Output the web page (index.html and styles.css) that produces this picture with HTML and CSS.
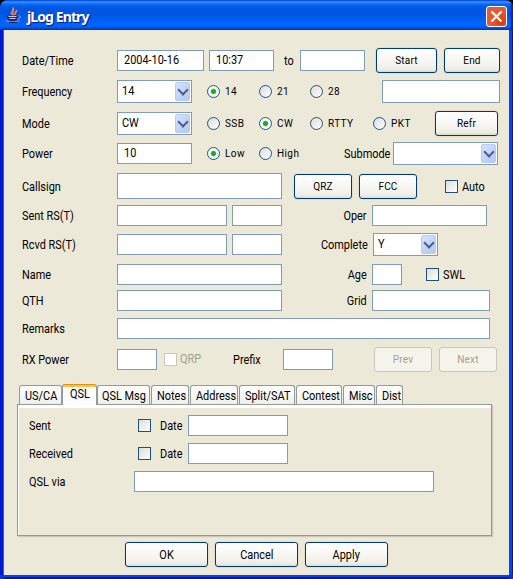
FILE: index.html
```html
<!DOCTYPE html>
<html lang="en">
<head>
<meta charset="utf-8">
<title>jLog Entry</title>
<link rel="stylesheet" href="styles.css">
</head>
<body>
<div class="window">
  <header class="titlebar">
    <svg class="java" width="18" height="18" viewBox="0 0 18 18" fill="none">
      <path d="M8.500 9.500C5 6.800 9.500 5.500 8 1.500M10 9c-1.500-2 2.500-3 1.500-5" stroke="#f58a55" stroke-width="1.700"/>
      <path d="M6.500 8.500C5.500 7 6 6 7 5" stroke="#b98795"/>
      <path d="M2 9.500h11c0 4-1.800 5.500-5.500 5.500S2 13.500 2 9.500z" fill="#25265f"/>
      <path d="M3.500 10.500h8M4.500 12.500h6" stroke="#c5cbe9"/>
      <path d="M13 10c3.500-1 3.500 2.500-.8 3M.8 14.500c2.500 2 11 2 14 0" stroke="#8e9bd8"/>
      <path d="M4 16.500h8" stroke="#25265f"/>
    </svg>
    <h1>jLog Entry</h1>
    <button class="close" aria-label="Close"><svg width="13" height="13" viewBox="0 0 13 13"><path d="M1.500 1.500l10 10M11.500 1.500l-10 10" stroke="#fff" stroke-width="2.300"/></svg></button>
  </header>
  <main>
    <div class="row r-date">
      <label><span>Date/Time</span></label>
      <div class="field"><span>2004-10-16</span></div>
      <div class="field"><span>10:37</span></div>
      <label><span>to</span></label>
      <div class="field"></div>
      <button class="btn">Start</button>
      <button class="btn">End</button>
    </div>
    <div class="row r-freq">
      <label><span>Frequency</span></label>
      <div class="combo"><span>14</span><i class="arrow"></i></div>
      <label class="radio on"><i></i>14</label>
      <label class="radio"><i></i>21</label>
      <label class="radio"><i></i>28</label>
      <div class="field tall"></div>
    </div>
    <div class="row r-mode">
      <label><span>Mode</span></label>
      <div class="combo"><span>CW</span><i class="arrow"></i></div>
      <label class="radio"><i></i>SSB</label>
      <label class="radio on"><i></i>CW</label>
      <label class="radio"><i></i>RTTY</label>
      <label class="radio"><i></i>PKT</label>
      <button class="btn">Refr</button>
    </div>
    <div class="row r-power">
      <label><span>Power</span></label>
      <div class="field"><span>10</span></div>
      <label class="radio on"><i></i>Low</label>
      <label class="radio"><i></i>High</label>
      <label><span>Submode</span></label>
      <div class="combo"><span></span><i class="arrow"></i></div>
    </div>
    <div class="row r-call">
      <label><span>Callsign</span></label>
      <div class="field"></div>
      <button class="btn">QRZ</button>
      <button class="btn">FCC</button>
      <label class="check"><i></i><span>Auto</span></label>
    </div>
    <div class="row r-sent">
      <label><span>Sent RS(T)</span></label>
      <div class="field"></div>
      <div class="field"></div>
      <label class="right"><span>Oper</span></label>
      <div class="field"></div>
    </div>
    <div class="row r-rcvd">
      <label><span>Rcvd RS(T)</span></label>
      <div class="field"></div>
      <div class="field"></div>
      <label class="right"><span>Complete</span></label>
      <div class="combo"><span>Y</span><i class="arrow"></i></div>
    </div>
    <div class="row r-name">
      <label><span>Name</span></label>
      <div class="field"></div>
      <label class="right"><span>Age</span></label>
      <div class="field"></div>
      <label class="check"><i></i><span>SWL</span></label>
    </div>
    <div class="row r-qth">
      <label><span>QTH</span></label>
      <div class="field"></div>
      <label class="right"><span>Grid</span></label>
      <div class="field"></div>
    </div>
    <div class="row r-remarks">
      <label><span>Remarks</span></label>
      <div class="field"></div>
    </div>
    <div class="row r-rx">
      <label><span>RX Power</span></label>
      <div class="field"></div>
      <label class="check off"><i></i><span>QRP</span></label>
      <label><span>Prefix</span></label>
      <div class="field"></div>
      <button class="btn" disabled>Prev</button>
      <button class="btn" disabled>Next</button>
    </div>
    <nav class="tabs">
      <div class="tab"><span>US/CA</span></div>
      <div class="tab active"><span>QSL</span></div>
      <div class="tab"><span>QSL Msg</span></div>
      <div class="tab"><span>Notes</span></div>
      <div class="tab"><span>Address</span></div>
      <div class="tab"><span>Split/SAT</span></div>
      <div class="tab"><span>Contest</span></div>
      <div class="tab"><span>Misc</span></div>
      <div class="tab"><span>Dist</span></div>
    </nav>
    <section class="panel">
      <div class="row p-date">
        <label><span>Sent</span></label>
        <label class="check"><i></i><span>Date</span></label>
        <div class="field"></div>
      </div>
      <div class="row p-date">
        <label><span>Received</span></label>
        <label class="check"><i></i><span>Date</span></label>
        <div class="field"></div>
      </div>
      <div class="row p-via">
        <label><span>QSL via</span></label>
        <div class="field"></div>
      </div>
    </section>
    <footer>
      <button class="btn main"><span>OK</span></button>
      <button class="btn main"><span>Cancel</span></button>
      <button class="btn main"><span>Apply</span></button>
    </footer>
  </main>
</div>
</body>
</html>
```
FILE: styles.css
```css
* { box-sizing: border-box; }
body {
  margin: 0;
  background: #000;
  font: 13px/15px Roboto, sans-serif;
  color: #000;
}
button { font: inherit; padding: 0; margin: 0; color: inherit; }
i { display: block; flex: none; }

/* condensed form text */
span {
  display: inline-block;
  transform: scaleX(.84);
  transform-origin: left;
}
.right span { transform-origin: right; }
.btn span { transform-origin: center; }

.window {
  width: 513px;
  height: 579px;
  border-radius: 8px 8px 0 0;
  overflow: hidden;
  display: flex;
  flex-direction: column;
  background: #0831d9;
}
.titlebar {
  flex: none;
  height: 30px;
  display: flex;
  align-items: center;
  padding: 2px 6px 0 5px;
  background: linear-gradient(#0058e6 0, #3a93ff 2px, #0a6af5 4px, #0055e2 8px, #0054e3 15px, #0062fb 22px, #0066ff 26px, #0050d8 28px, #003dc0 30px);
  box-shadow: inset -2px 0 2px #0020a0;
}
.java { margin-top: -2px; }
h1 {
  margin: 2px auto 0 4px;
  font: bold 14px/18px "Noto Sans", sans-serif;
  letter-spacing: -.9px;
  color: #fff;
  text-shadow: 1px 1px 1px #0a1883;
}
.close {
  width: 21px;
  height: 21px;
  display: flex;
  align-items: center;
  justify-content: center;
  border: 1px solid #fff;
  border-radius: 3px;
  background: radial-gradient(circle at 75% 80%, #d93c08, #e5582f 50%, #d8604a 100%);
}
main {
  flex: 1;
  margin: 0 4px 4px;
  padding-top: 18px;
  background: #ece9d8;
  box-shadow: -1px 0 #166aee, -4px 0 #0019cf, 3px 0 #0046ea, 4px 0 #00139a, 0 2px #0046ea, 0 4px #00139a;
}

.row {
  display: grid;
  align-items: center;
  height: 25px;
  padding-left: 18px;
}
.row label { white-space: nowrap; }
.row .right { justify-self: end; padding-right: 5px; }
.r-date { grid-template-columns: 95px 92px 75px 16px 76px 68px 56px; margin-bottom: 6px; }
.r-date > :nth-child(2) { width: 87px; }
.r-date > :nth-child(3), .r-date > :nth-child(5) { width: 65px; }
.r-date > :nth-child(6) { width: 61px; }
.r-freq { grid-template-columns: 95px 90px 52px 51px 72px 118px; margin-bottom: 7px; }
.r-mode { grid-template-columns: 95px 90px 52px 51px 63px 62px 63px; margin-bottom: 5px; }
.r-power { grid-template-columns: 95px 90px 52px 85px 49px 105px; margin-bottom: 7px; }
.r-freq .combo, .r-mode .combo, .r-power .field { width: 75px; }
.r-call { grid-template-columns: 95px 177px 65px 86px 50px; height: 26px; margin-bottom: 4px; }
.r-call .field { width: 165px; height: 26px; }
.r-call .btn { width: 58px; margin-top: 1px; }
.r-sent, .r-rcvd { grid-template-columns: 95px 115px 50px 90px 115px; margin-bottom: 4px; }
.r-sent > :nth-child(2), .r-rcvd > :nth-child(2) { width: 110px; }
.r-rcvd { margin-bottom: 5px; }
.r-rcvd > .combo { width: 65px; margin-left: 1px; }
.r-rcvd .right { padding-right: 4px; }
.r-name { grid-template-columns: 95px 165px 90px 54px 60px; margin-bottom: 1px; }
.r-name > :nth-child(4) { width: 30px; }
.r-qth { grid-template-columns: 95px 165px 90px 118px; margin-bottom: 3px; }
.r-remarks { grid-template-columns: 95px 373px; margin-bottom: 6px; }
.r-rx { grid-template-columns: 95px 47px 69px 50px 91px 65px 58px; margin-bottom: 12px; }
.r-rx > :nth-child(2) { width: 40px; }
.r-rx > :nth-child(5) { width: 50px; }
.r-rx .btn { width: 58px; }

.field, .combo {
  height: 21px;
  border: 1px solid #7f9db9;
  background: #fff;
  line-height: 18px;
}
.field { padding-left: 6px; }
.field.tall { height: 23px; }
.combo {
  height: 23px;
  display: flex;
  justify-content: space-between;
  padding: 1px 1px 1px 4px;
}
.arrow {
  width: 15px;
  height: 19px;
  border: 1px solid #b8cbf3;
  border-radius: 2px;
  background: linear-gradient(135deg, #d6e2fd, #b2c8f7);
  display: flex;
  align-items: center;
  justify-content: center;
}
.arrow::before {
  content: "";
  width: 6px;
  height: 6px;
  margin-top: -3px;
  border: solid #4d6185;
  border-width: 0 2px 2px 0;
  transform: rotate(45deg);
}
.btn {
  height: 25px;
  border: 1px solid #003c74;
  border-radius: 3px;
  background: linear-gradient(#fff, #f4f3ee 70%, #ecebe4 90%, #dcd8cc);
  box-shadow: 0 0 0 1px #e3dfcf;
  font: 10px/20px Roboto, sans-serif;
  letter-spacing: .2px;
}
.btn.main { font: 13px/20px Roboto, sans-serif; letter-spacing: 0; }
.btn:disabled { border-color: #c9c7ba; background: #f5f4ea; color: #a1a192; box-shadow: none; }

.radio, .check { display: flex; align-items: center; }
.radio { gap: 5px; font: 10px/15px Roboto, sans-serif; letter-spacing: .4px; }
.radio i {
  width: 13px;
  height: 13px;
  border: 1px solid #21557f;
  border-radius: 50%;
  background: linear-gradient(135deg, #dcdcd7, #fff);
}
.radio.on i { background: radial-gradient(circle, #22a81e 2px, #fff 3.3px); }
.check { gap: 4px; }
.check i {
  width: 13px;
  height: 13px;
  border: 1px solid #1c5180;
  background: linear-gradient(135deg, #dcdcd7, #fff);
}
.check.off { color: #a1a192; gap: 3px; }
.check.off i { border-color: #cac8bb; background: #fff; }
.check.off span { margin-top: -3px; }

.tabs {
  display: flex;
  align-items: flex-end;
  height: 20px;
  padding-left: 15px;
}
.tab {
  height: 19px;
  width: 43px;
  margin-right: 1px;
  border: 1px solid #919b9c;
  border-bottom: 0;
  border-radius: 3px 3px 0 0;
  background: linear-gradient(#fff, #f0f0ea);
  padding-left: 5px;
  line-height: 20px;
  white-space: nowrap;
}
.tab:nth-child(1) { margin-right: 0; }
.tab:nth-child(2) { width: 35px; margin-right: 0; }
.tab:nth-child(3) { width: 53px; padding-left: 4px; }
.tab:nth-child(4) { width: 38px; }
.tab:nth-child(5) { width: 48px; }
.tab:nth-child(6) { width: 56px; }
.tab:nth-child(7) { width: 46px; }
.tab:nth-child(8) { width: 32px; }
.tab:nth-child(9) { width: 27px; }
.tab.active {
  position: relative;
  height: 21px;
  margin-bottom: -1px;
  padding-left: 7px;
  border-top: 1px solid #e68b2c;
  background: linear-gradient(#ffc73c 2px, #fcfcfe 2px);
  line-height: 18px;
}
.panel {
  width: 475px;
  height: 132px;
  margin-left: 13px;
  padding-top: 5px;
  border: 1px solid #919b9c;
  box-shadow: inset 0 3px #fff, inset 1px 0 #fff, 1px 1px 1px #cbc8b9;
}
.panel .row { padding-left: 11px; margin-top: 3px; }
.p-date { grid-template-columns: 109px 50px 100px; }
.p-date .check { gap: 9px; }
.p-via { grid-template-columns: 105px 300px; }
footer { display: flex; gap: 7px; padding: 6px 0 0 121px; }
footer .btn { width: 83px; }
```
